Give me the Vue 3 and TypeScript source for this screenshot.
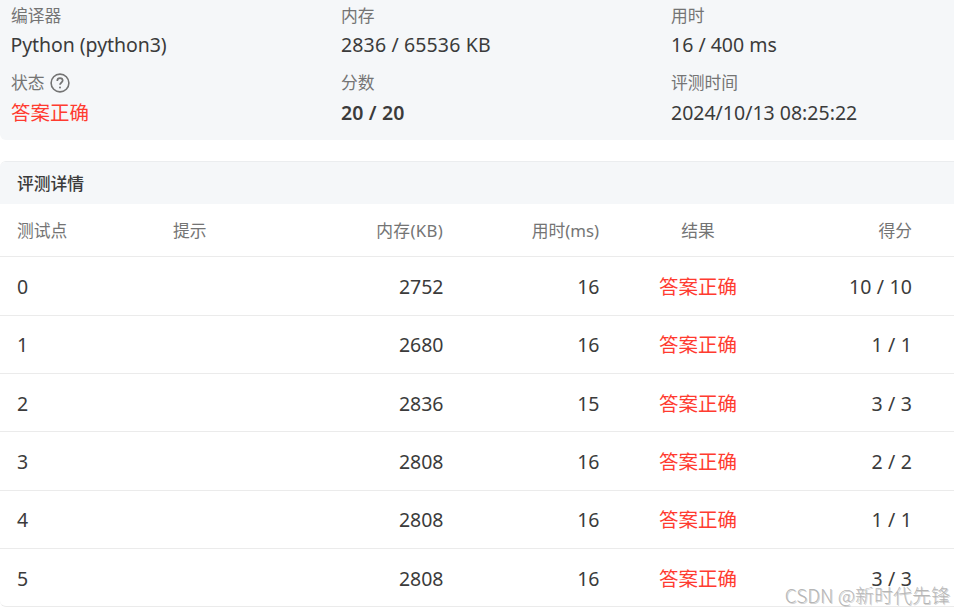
<script setup lang="ts">
interface TestPoint {
  id: number
  memory: number
  time: number
  score: string
}

const points: TestPoint[] = [
  { id: 0, memory: 2752, time: 16, score: '10 / 10' },
  { id: 1, memory: 2680, time: 16, score: '1 / 1' },
  { id: 2, memory: 2836, time: 15, score: '3 / 3' },
  { id: 3, memory: 2808, time: 16, score: '2 / 2' },
  { id: 4, memory: 2808, time: 16, score: '1 / 1' },
  { id: 5, memory: 2808, time: 16, score: '3 / 3' },
]
</script>

<template>
  <main class="page">
    <section class="summary">
      <div class="field">
        <div class="label">编译器</div>
        <div class="value compiler">Python (python3)</div>
      </div>
      <div class="field">
        <div class="label">内存</div>
        <div class="value memory">2836 / 65536 KB</div>
      </div>
      <div class="field">
        <div class="label">用时</div>
        <div class="value time">16 / 400 ms</div>
      </div>
      <div class="field lower">
        <div class="label">
          状态
          <svg class="help" viewBox="0 0 20 20" fill="none" stroke="currentColor">
            <circle cx="10" cy="10" r="8.9" stroke-width="1.6" />
            <path d="M7.3 8V7.7C7.3 6.2 8.4 5.1 10 5.1S12.7 6.1 12.7 7.6C12.7 9.4 10 9.6 10 11.8" stroke-width="1.7" />
            <circle cx="10" cy="14.4" r="1" fill="currentColor" stroke="none" />
          </svg>
        </div>
        <div class="value accepted">答案正确</div>
      </div>
      <div class="field lower">
        <div class="label">分数</div>
        <div class="value total">20 / 20</div>
      </div>
      <div class="field lower">
        <div class="label">评测时间</div>
        <div class="value date">2024/10/13 08:25:22</div>
      </div>
    </section>

    <section class="details">
      <h2 class="title">评测详情</h2>
      <div class="row head">
        <span>测试点</span>
        <span>提示</span>
        <span class="right memory-head">内存(KB)</span>
        <span class="right">用时(ms)</span>
        <span class="center">结果</span>
        <span class="right">得分</span>
      </div>
      <div v-for="p in points" :key="p.id" class="row item">
        <span>{{ p.id }}</span>
        <span></span>
        <span class="right number">{{ p.memory }}</span>
        <span class="right number">{{ p.time }}</span>
        <span class="center accepted">答案正确</span>
        <span class="right score">{{ p.score }}</span>
      </div>
    </section>

    <div class="watermark">CSDN @新时代先锋</div>
  </main>
</template>

<style>
body {
  margin: 0;
  background: #fff;
}
</style>

<style scoped>
.page {
  position: relative;
  width: 954px;
  height: 614px;
  overflow: hidden;
  color: #3b3b3b;
  font-family: "Noto Sans", "Noto Sans CJK SC", sans-serif;
  font-size: 19.5px;
}
.summary {
  box-sizing: border-box;
  display: grid;
  grid-template-columns: 330px 330px 1fr;
  grid-auto-rows: 68px;
  height: 140px;
  padding: 2px 0 0 11px;
  overflow: hidden;
  background: #f5f7f9;
  border-radius: 0 0 0 6px;
}
.label {
  display: flex;
  align-items: center;
  gap: 5.8px;
  height: 27px;
  line-height: 27px;
  font-size: 16.8px;
  color: #747474;
}
.lower .label {
  height: 25px;
  padding-bottom: 2px;
  line-height: 25px;
}
.help {
  width: 20px;
  height: 20px;
  margin-top: 1.5px;
}
.value {
  height: 32px;
  line-height: 32px;
  white-space: nowrap;
}
.compiler {
  margin-left: -0.5px;
  letter-spacing: -0.06px;
}
.memory {
  letter-spacing: 0.14px;
}
.accepted {
  color: #ff3b30;
}
.total {
  font-weight: 600;
  letter-spacing: 0.15px;
}
.details {
  box-sizing: border-box;
  height: 446px;
  margin-top: 21px;
  overflow: hidden;
  border-top: 1px solid #ebedef;
  border-bottom: 1px solid #ebebeb;
  border-radius: 6px 0 0 6px;
}
.title {
  height: 42px;
  margin: 0;
  padding-left: 17px;
  line-height: 43px;
  background: #f5f7f9;
  font-size: 16.8px;
  font-weight: 500;
}
.row {
  box-sizing: border-box;
  display: grid;
  grid-template-columns: 156px 156px 148px 156px 164px 149px;
  align-items: center;
  height: 58px;
  border-bottom: 1px solid #ebebeb;
}
.row > span {
  padding: 0 17px;
  line-height: 32px;
  white-space: nowrap;
}
.row.head {
  height: 53px;
  padding-top: 2px;
  font-size: 16.8px;
  color: #747474;
}
.head > .memory-head {
  letter-spacing: 0.3px;
}
.item:nth-child(3),
.item:nth-child(6) {
  height: 59px;
}
.item:nth-child(3n),
.item:nth-child(3n + 5) {
  padding-top: 2px;
}
.item:last-child {
  border-bottom: 0;
}
.row > .right {
  text-align: right;
}
.row > .number {
  padding-right: 16.5px;
}
.row > .score {
  letter-spacing: 0.15px;
}
.row > .center {
  text-align: center;
}
.watermark {
  position: absolute;
  right: 4px;
  bottom: 6px;
  font-family: "Noto Sans CJK SC", sans-serif;
  font-size: 19px;
  font-weight: 300;
  line-height: 26px;
  color: rgba(178, 178, 178, 0.95);
  text-shadow: 1px 1px 0 rgba(160, 160, 160, 0.45);
  white-space: nowrap;
}
</style>
